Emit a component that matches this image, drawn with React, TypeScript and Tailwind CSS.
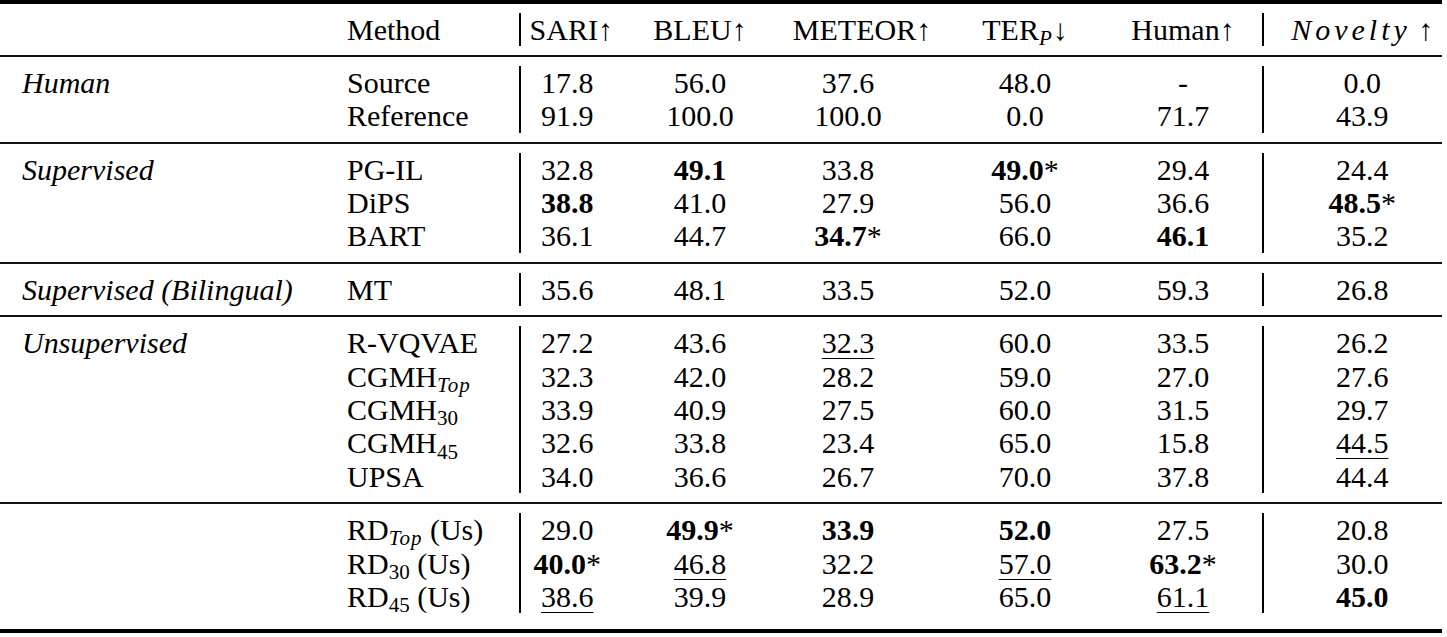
import React from "react"

type Cell = { v: string; b: boolean; u: boolean; s: boolean }

// "!" = bold, "_" = underline, trailing "*" = significance star
const parse = (raw: string): Cell => {
  let v = raw
  const b = v.startsWith("!")
  if (b) v = v.slice(1)
  const u = v.startsWith("_")
  if (u) v = v.slice(1)
  const s = v.endsWith("*")
  if (s) v = v.slice(0, -1)
  return { v, b, u, s }
}

const GRID =
  "grid grid-cols-[335px_184px_1.5px_93.5px_172px_124px_230px_86px_36px_1.5px_178.5px] auto-rows-[33.4px] leading-[33.4px]"

const Sub = ({ children, math }: { children: React.ReactNode; math?: boolean }) => (
  <sub className={math ? "text-[21px] italic tracking-[1px]" : "text-[21px]"}>{children}</sub>
)

interface Row {
  method: React.ReactNode
  vals: string[]
}

interface Group {
  label?: string
  rows: Row[]
  last?: boolean
}

const groups: Group[] = [
  {
    label: "Human",
    rows: [
      { method: "Source", vals: ["17.8", "56.0", "37.6", "48.0", "-", "0.0"] },
      { method: "Reference", vals: ["91.9", "100.0", "100.0", "0.0", "71.7", "43.9"] },
    ],
  },
  {
    label: "Supervised",
    rows: [
      { method: "PG-IL", vals: ["32.8", "!49.1", "33.8", "!49.0*", "29.4", "24.4"] },
      { method: "DiPS", vals: ["!38.8", "41.0", "27.9", "56.0", "36.6", "!48.5*"] },
      { method: "BART", vals: ["36.1", "44.7", "!34.7*", "66.0", "!46.1", "35.2"] },
    ],
  },
  {
    label: "Supervised (Bilingual)",
    rows: [{ method: "MT", vals: ["35.6", "48.1", "33.5", "52.0", "59.3", "26.8"] }],
  },
  {
    label: "Unsupervised",
    rows: [
      { method: "R-VQVAE", vals: ["27.2", "43.6", "_32.3", "60.0", "33.5", "26.2"] },
      {
        method: (
          <>
            CGMH<Sub math>Top</Sub>
          </>
        ),
        vals: ["32.3", "42.0", "28.2", "59.0", "27.0", "27.6"],
      },
      {
        method: (
          <>
            CGMH<Sub>30</Sub>
          </>
        ),
        vals: ["33.9", "40.9", "27.5", "60.0", "31.5", "29.7"],
      },
      {
        method: (
          <>
            CGMH<Sub>45</Sub>
          </>
        ),
        vals: ["32.6", "33.8", "23.4", "65.0", "15.8", "_44.5"],
      },
      { method: "UPSA", vals: ["34.0", "36.6", "26.7", "70.0", "37.8", "44.4"] },
    ],
  },
  {
    last: true,
    rows: [
      {
        method: (
          <>
            RD<Sub math>Top</Sub> (Us)
          </>
        ),
        vals: ["29.0", "!49.9*", "!33.9", "!52.0", "27.5", "20.8"],
      },
      {
        method: (
          <>
            RD<Sub>30</Sub> (Us)
          </>
        ),
        vals: ["!40.0*", "_46.8", "32.2", "_57.0", "!63.2*", "30.0"],
      },
      {
        method: (
          <>
            RD<Sub>45</Sub> (Us)
          </>
        ),
        vals: ["_38.6", "39.9", "28.9", "65.0", "_61.1", "!45.0"],
      },
    ],
  },
]

const Value = ({ raw }: { raw: string }) => {
  const c = parse(raw)
  return (
    <span>
      <span
        className={`${c.b ? "font-bold" : ""} ${c.u ? "underline decoration-1 underline-offset-[5px]" : ""}`}
      >
        {c.v}
      </span>
      {c.s && <span>*</span>}
    </span>
  )
}

const Rule = ({ thick }: { thick?: boolean }) => (
  <div className={thick ? "h-[3.5px] w-[1442px] bg-black" : "h-[2px] w-[1442px] bg-[#111]"} />
)

const Bar = () => <div className="bg-black" />

const C = "flex justify-center whitespace-nowrap"

export default function App() {
  return (
    <div className="w-[1447px] h-[637px] overflow-hidden bg-white text-black text-[30px] font-['Liberation_Serif','Times_New_Roman',serif]">
      <Rule thick />

      {/* header */}
      <div className="py-[9px]">
        <div className={GRID}>
          <div />
          <div className="pl-[12px]">Method</div>
          <Bar />
          <div className={`${C} pl-[8px]`}>SARI↑</div>
          <div className={C}>BLEU↑</div>
          <div className={`${C} pl-[28px]`}>METEOR↑</div>
          <div className={C}>
            <span>
              TER<Sub math>P</Sub>↓
            </span>
          </div>
          <div className={C}>Human↑</div>
          <div />
          <Bar />
          <div className={`${C} pl-[19px]`}>
            <span>
              <span className="italic tracking-[4px]">Novelty</span> ↑
            </span>
          </div>
        </div>
      </div>

      {groups.map((g, gi) => (
        <React.Fragment key={gi}>
          <Rule />
          <div className={g.last ? "pt-[9px] pb-[16px]" : "py-[9px]"}>
            <div className={GRID}>
              {g.rows.map((r, ri) => (
                <React.Fragment key={ri}>
                  <div className="pl-[22px] italic whitespace-nowrap">{ri === 0 ? g.label : ""}</div>
                  <div className="pl-[12px] whitespace-nowrap">{r.method}</div>
                  <Bar />
                  {r.vals.slice(0, 5).map((v, vi) => (
                    <div key={vi} className={C}>
                      <Value raw={v} />
                    </div>
                  ))}
                  <div />
                  <Bar />
                  <div className={`${C} pl-[19px]`}>
                    <Value raw={r.vals[5]} />
                  </div>
                </React.Fragment>
              ))}
            </div>
          </div>
        </React.Fragment>
      ))}
      <Rule thick />
    </div>
  )
}
